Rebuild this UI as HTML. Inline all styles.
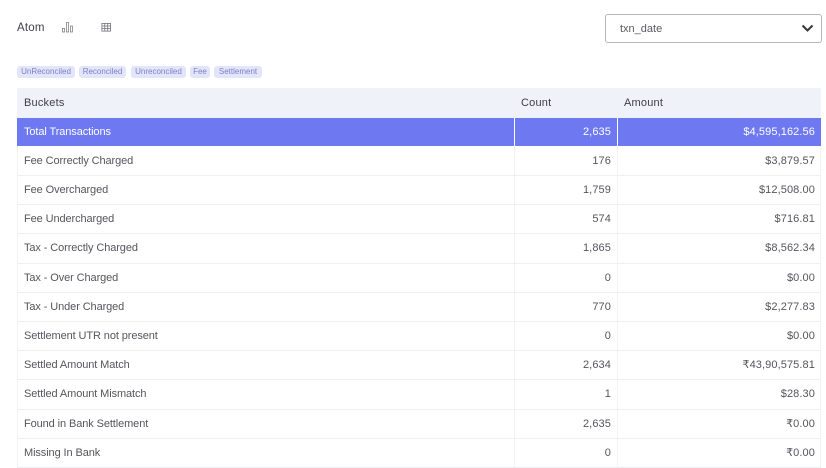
<!DOCTYPE html>
<html><head><meta charset="utf-8">
<style>
html,body{margin:0;padding:0;background:#fff;width:826px;height:468px;overflow:hidden}
body{position:relative;font-family:"Liberation Sans","DejaVu Sans",sans-serif;color:#55565c;font-size:11px}
.a{position:absolute;white-space:nowrap}
.tag{position:absolute;top:66px;height:12px;line-height:12px;background:#e3e5fb;border-radius:3px;color:#7a80c8;font-size:8px;text-align:center;white-space:nowrap}
.hl{position:absolute;left:17px;width:804px;height:1px;background:#edeff3}
.vl{position:absolute;top:146px;width:1px;height:322px;background:#f0f2f5}
.t{position:absolute;left:24px;white-space:nowrap;line-height:14px;font-size:11px;letter-spacing:-.1px;margin-top:1px}
.c{position:absolute;right:215px;white-space:nowrap;line-height:14px;font-size:11px;letter-spacing:.1px;margin-top:1px}
.m{position:absolute;right:11px;white-space:nowrap;line-height:14px;font-size:11px;letter-spacing:.1px;margin-top:1px}
</style></head><body>
<div class="a" style="left:17px;top:21px;font-size:11.5px;line-height:14px;color:#3f4046;letter-spacing:.2px">Atom</div>
<svg class="a" style="left:61px;top:21px" width="13" height="13" viewBox="0 0 13 13" fill="none" stroke="#6f7278" stroke-width=".7"><rect x="1.4" y="7.4" width="2.2" height="3.6"/><rect x="5.4" y="1.6" width="2.2" height="9.4"/><rect x="9.4" y="5" width="2" height="6"/></svg>
<svg class="a" style="left:101px;top:22px" width="11" height="11" viewBox="0 0 11 11" fill="none" stroke="#6f7278" stroke-width=".8"><rect x=".9" y="1.4" width="8.7" height="7.7"/><path d="M.9 4h8.7M.9 6.6h8.7M3.8 1.4v7.7M6.7 1.4v7.7"/></svg>

<div class="a" style="left:605px;top:14px;width:215px;height:27px;border:1px solid #b5b7bb;border-radius:3px;background:#fff"></div>
<div class="a" style="left:620px;top:22px;line-height:14px;font-size:11px;color:#5a5b60">txn_date</div>
<svg class="a" style="left:800px;top:23px" width="15" height="11" viewBox="0 0 15 11" fill="none" stroke="#33353a" stroke-width="2"><path d="M2.5 2.5L7.5 7.5L12.5 2.5"/></svg>

<div class="tag" style="left:17px;width:58px">UnReconciled</div>
<div class="tag" style="left:79px;width:47px">Reconciled</div>
<div class="tag" style="left:131px;width:55px">Unreconciled</div>
<div class="tag" style="left:190px;width:20px">Fee</div>
<div class="tag" style="left:214px;width:48px">Settlement</div>

<div class="a" style="left:17px;top:88px;width:804px;height:30px;background:#eff2f9"></div>
<div class="a" style="left:24px;top:96px;line-height:14px;color:#3f4046;letter-spacing:.2px">Buckets</div>
<div class="a" style="left:521px;top:96px;line-height:14px;color:#3f4046;letter-spacing:.2px">Count</div>
<div class="a" style="left:624px;top:96px;line-height:14px;color:#3f4046;letter-spacing:.2px">Amount</div>

<div class="a" style="left:17px;top:118px;width:804px;height:28px;background:#6e78f0"></div>
<div class="a" style="left:514px;top:118px;width:1px;height:28px;background:#fff"></div>
<div class="a" style="left:617px;top:118px;width:1px;height:28px;background:#fff"></div>
<div class="t" style="top:124px;color:#fff">Total Transactions</div>
<div class="c" style="top:124px;color:#fff">2,635</div>
<div class="m" style="top:124px;color:#fff">$4,595,162.56</div>

<div class="vl" style="left:17px"></div>
<div class="vl" style="left:514px"></div>
<div class="vl" style="left:617px"></div>
<div class="vl" style="left:820px"></div>
<div class="hl" style="top:175px"></div>
<div class="hl" style="top:204px"></div>
<div class="hl" style="top:233px"></div>
<div class="hl" style="top:263px"></div>
<div class="hl" style="top:292px"></div>
<div class="hl" style="top:321px"></div>
<div class="hl" style="top:350px"></div>
<div class="hl" style="top:379px"></div>
<div class="hl" style="top:409px"></div>
<div class="hl" style="top:438px"></div>
<div class="hl" style="top:467px"></div>

<div class="t" style="top:153px">Fee Correctly Charged</div><div class="c" style="top:153px">176</div><div class="m" style="top:153px">$3,879.57</div>
<div class="t" style="top:182px">Fee Overcharged</div><div class="c" style="top:182px">1,759</div><div class="m" style="top:182px">$12,508.00</div>
<div class="t" style="top:211px">Fee Undercharged</div><div class="c" style="top:211px">574</div><div class="m" style="top:211px">$716.81</div>
<div class="t" style="top:240px">Tax - Correctly Charged</div><div class="c" style="top:240px">1,865</div><div class="m" style="top:240px">$8,562.34</div>
<div class="t" style="top:270px">Tax - Over Charged</div><div class="c" style="top:270px">0</div><div class="m" style="top:270px">$0.00</div>
<div class="t" style="top:299px">Tax - Under Charged</div><div class="c" style="top:299px">770</div><div class="m" style="top:299px">$2,277.83</div>
<div class="t" style="top:328px">Settlement UTR not present</div><div class="c" style="top:328px">0</div><div class="m" style="top:328px">$0.00</div>
<div class="t" style="top:357px">Settled Amount Match</div><div class="c" style="top:357px">2,634</div><div class="m" style="top:357px">₹43,90,575.81</div>
<div class="t" style="top:386px">Settled Amount Mismatch</div><div class="c" style="top:386px">1</div><div class="m" style="top:386px">$28.30</div>
<div class="t" style="top:416px">Found in Bank Settlement</div><div class="c" style="top:416px">2,635</div><div class="m" style="top:416px">₹0.00</div>
<div class="t" style="top:445px">Missing In Bank</div><div class="c" style="top:445px">0</div><div class="m" style="top:445px">₹0.00</div>
</body></html>
